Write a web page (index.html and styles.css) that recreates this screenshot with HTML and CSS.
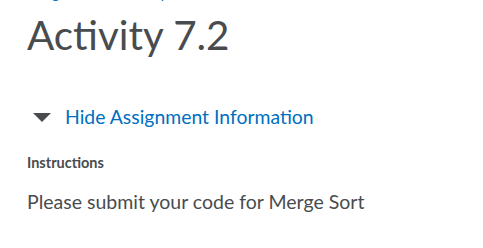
FILE: index.html
```html
<!DOCTYPE html>
<html lang="en">

<head>
  <meta charset="UTF-8" />
  <meta name="viewport" content="width=device-width, initial-scale=1.0" />
  <title>Activity 7.2</title>
  <link rel="stylesheet" href="styles.css">
</head>

<body>
  <div class="page">
    <div class="breadcrumbs">
      <a href="#">Assignments</a> <span class="sep">&gt;</span> <a href="#">Activity</a>
    </div>
    <h1 class="title">Activity 7.2</h1>
    <button class="toggle">
      <span class="caret"></span>
      <span class="toggle-text">Hide Assignment Information</span>
    </button>
    <h2 class="label">Instructions</h2>
    <p class="text">Please submit your code for Merge Sort</p>
  </div>
</body>

</html>
```

FILE: styles.css
```css
* {
  box-sizing: border-box;
}

body {
  margin: 0;
  font-family: Lato, "Noto Sans", sans-serif;
  color: #494c4e;
  background: #fff;
}

.page {
  padding: 0 27px;
}

/* only the bottom of the breadcrumb is visible */
.breadcrumbs {
  margin-top: -14px;
  height: 15px;
  font-size: 14px;
  line-height: 15px;
  color: #006fbf;
}

.breadcrumbs a {
  color: #006fbf;
  text-decoration: none;
}

.title {
  margin: 10px 0 0;
  font-size: 40.4px;
  font-weight: 400;
  line-height: 48px;
}

.toggle {
  display: flex;
  align-items: center;
  gap: 14px;
  margin: 46px 0 0 6px;
  padding: 0;
  border: none;
  background: none;
  font-family: inherit;
  cursor: pointer;
}

.caret {
  width: 0;
  height: 0;
  border-left: 9px solid transparent;
  border-right: 9px solid transparent;
  border-top: 9px solid #494c4e;
}

.toggle-text {
  font-size: 19.4px;
  line-height: 24px;
  color: #006fbf;
}

.label {
  margin: 26px 0 0;
  font-size: 14.5px;
  font-weight: 700;
  line-height: 16px;
}

.text {
  margin: 19px 0 0;
  font-size: 19.5px;
  line-height: 24px;
}
```
